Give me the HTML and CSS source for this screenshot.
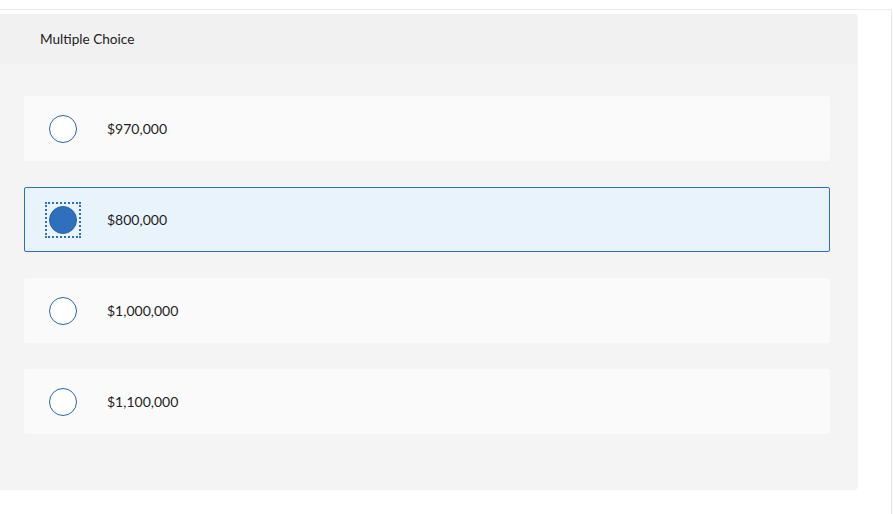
FILE: index.html
```html
<!DOCTYPE html>
<html>
<head>
<meta charset="utf-8">
<link rel="stylesheet" href="styles.css">
</head>
<body>
<div class="frame">
  <div class="card">
    <div class="card-head">Multiple Choice</div>
    <div class="card-body">
      <label class="option">
        <span class="radio"></span>
        <span class="label">$970,000</span>
      </label>
      <label class="option selected">
        <span class="focus"><span class="radio checked"></span></span>
        <span class="label">$800,000</span>
      </label>
      <label class="option">
        <span class="radio"></span>
        <span class="label">$1,000,000</span>
      </label>
      <label class="option">
        <span class="radio"></span>
        <span class="label">$1,100,000</span>
      </label>
    </div>
  </div>
</div>
</body>
</html>
```
FILE: styles.css
```css
html, body {
  margin: 0;
  padding: 0;
  background: #ffffff;
}
body {
  font-family: "Lato", "Open Sans", sans-serif;
  color: #222222;
  width: 893px;
  height: 514px;
  overflow: hidden;
}
.frame {
  margin-top: 9px;
  width: 892px;
  height: 505px;
  border-top: 1px solid #ebebeb;
  border-right: 1px solid #e6e6e6;
  box-sizing: border-box;
  padding-top: 4px;
}
.card {
  width: 858px;
  background: #f4f4f4;
  border-radius: 0 4px 4px 0;
  overflow: hidden;
}
.card-head {
  height: 50px;
  background: #f1f1f1;
  padding-left: 40px;
  font-size: 13.6px;
  line-height: 50px;
  color: #222;
}
.card-body {
  padding: 32px 28px 56px 24px;
  display: flex;
  flex-direction: column;
  gap: 26px;
}
.option {
  height: 65px;
  background: #fafafa;
  border: 1px solid transparent;
  border-radius: 2px;
  box-sizing: border-box;
  display: flex;
  align-items: center;
  padding-left: 24px;
}
.option.selected {
  background: #e9f3fc;
  border-color: #2f6fbd;
}
.radio {
  width: 28px;
  height: 28px;
  box-sizing: border-box;
  border: 1px solid #2a66a8;
  border-radius: 50%;
  background: #ffffff;
  flex: none;
}
.radio.checked {
  background: #2e6fbe;
  border-color: #2a64a8;
  display: block;
}
.focus {
  flex: none;
  width: 28px;
  height: 28px;
  outline: 2px dotted #2e6fbe;
  outline-offset: 2px;
}
.label {
  margin-left: 30px;
  font-size: 14px;
  color: #1e1e1e;
}
```
